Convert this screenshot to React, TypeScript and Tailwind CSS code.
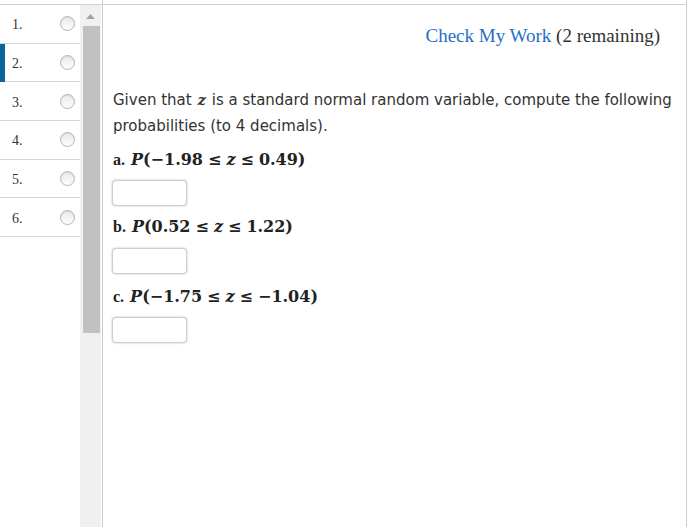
import React from "react";

const rows = ["1.", "2.", "3.", "4.", "5.", "6."];

function Radio() {
  return (
    <span className="block w-[15px] h-[15px] rounded-full border border-[#b4b4b4] bg-gradient-to-b from-[#e9e9e9] to-[#fdfdfd] shadow-[inset_0_1px_1px_rgba(0,0,0,0.08)]" />
  );
}

function Le() {
  return <span className="mx-[5px] not-italic">≤</span>;
}

function Answer() {
  return (
    <div className="ml-[-1px] w-[75px] h-[26px] rounded-[4px] border border-[#cfcfcf] bg-white shadow-[0_0_2px_rgba(0,0,0,0.3)]" />
  );
}

function Prob({ label, a, b }: { label: string; a: string; b: string }) {
  return (
    <div className="flex items-center h-[24px] leading-[24px] text-[#222] font-bold">
      <span className="text-[16px] [font-family:'Liberation_Serif',serif] mr-[6px]">{label}</span>
      <span className="text-[16px] [font-family:'DejaVu_Serif',serif] whitespace-pre">
        <span className="italic">P</span>({a}
        <Le />
        <span className="italic">z</span>
        <Le />
        {b})
      </span>
    </div>
  );
}

export default function App() {
  return (
    <div className="w-[688px] h-[527px] bg-white flex overflow-hidden">
      {/* Left pane */}
      <div className="w-[103px] h-full border-r border-[#cccccc] pt-[4px] flex flex-col">
        <div className="border-t border-[#d0d0d0] flex flex-1">
          <div className="w-[80px] flex flex-col">
            {rows.map((r, i) => (
              <div
                key={r}
                className="relative h-[38.7px] border-b border-[#d6d6d6] flex items-center justify-between pl-[12px] pr-[5px]"
              >
                {i === 1 && <div className="absolute left-0 top-0 bottom-[-1px] w-[5px] bg-[#0a64a0]" />}
                <span className="text-[14px] text-[#333] [font-family:'Liberation_Serif',serif] mt-[2px]">{r}</span>
                <Radio />
              </div>
            ))}
          </div>
          <div className="w-[21px] bg-[#f0f0f0] flex flex-col items-center">
            <div className="h-[21px] w-full flex items-center justify-center pt-[2px]">
              <svg width="9" height="5" viewBox="0 0 9 5">
                <path d="M0 5 L4.5 0 L9 5 Z" fill="#a3a3a3" />
              </svg>
            </div>
            <div className="w-[17px] h-[307px] bg-[#c1c1c1] ml-[2px]" />
          </div>
        </div>
      </div>

      {/* Content pane */}
      <div className="w-[584px] h-full border-r border-[#cccccc] pt-[4px] flex flex-col">
        <div className="border-t border-[#d0d0d0] flex-1 pl-[10px] pr-[8px]">
          <div className="mt-[20px] h-[22px] leading-[22px] text-right pr-[18px] text-[19px] [font-family:'Liberation_Serif',serif] text-[#333]">
            <span className="text-[#1f6fc5]">Check My Work</span> (2 remaining)
          </div>
          <p className="mt-[40px] text-[15px] leading-[26px] text-[#333] [font-family:'DejaVu_Sans',sans-serif]">
            Given that{" "}
            <span className="inline-block px-[1px] italic font-bold [font-family:'DejaVu_Serif',serif]">z</span>{" "}
            is a standard normal random variable, compute the following probabilities (to 4 decimals).
          </p>
          <div className="mt-[9px]">
            <Prob label="a." a="−1.98" b="0.49" />
          </div>
          <div className="mt-[8px]">
            <Answer />
          </div>
          <div className="mt-[9px]">
            <Prob label="b." a="0.52" b="1.22" />
          </div>
          <div className="mt-[9px]">
            <Answer />
          </div>
          <div className="mt-[11px]">
            <Prob label="c." a="−1.75" b="−1.04" />
          </div>
          <div className="mt-[8px]">
            <Answer />
          </div>
        </div>
      </div>
    </div>
  );
}
